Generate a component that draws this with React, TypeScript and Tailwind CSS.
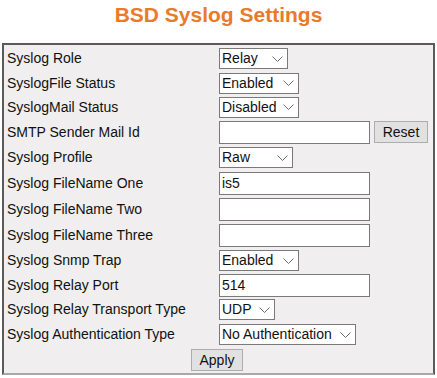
import React from "react";

const font = "font-['Liberation_Sans',Arial,sans-serif]";

function Chevron() {
  return (
    <svg className="pointer-events-none absolute right-[5px] top-1/2 -translate-y-1/2" width="11" height="6" viewBox="0 0 11 6" fill="none">
      <path d="M0.5 0.5 L5.5 5.5 L10.5 0.5" stroke="#6d6d6d" strokeWidth="1" />
    </svg>
  );
}

function Select({ value, options, width }: { value: string; options: string[]; width: string }) {
  return (
    <div className={`relative h-[21px] ${width}`}>
      <select
        defaultValue={value}
        className={`${font} block h-full w-full appearance-none border border-[#7a7a7a] bg-white pl-[2px] text-[14px] leading-[19px] text-[#111] outline-none`}
      >
        {options.map((o) => (
          <option key={o}>{o}</option>
        ))}
      </select>
      <Chevron />
    </div>
  );
}

function TextInput({ value = "" }: { value?: string }) {
  return (
    <input
      defaultValue={value}
      className={`${font} block h-[23px] w-[151px] border border-[#7a7a7a] bg-white px-[2px] text-[14px] text-[#111] outline-none`}
    />
  );
}

function Button({ label, width }: { label: string; width: string }) {
  return (
    <button className={`${font} h-[22px] ${width} border border-[#adadad] bg-[#e1e1e1] text-[14px] text-[#111]`}>{label}</button>
  );
}

function Row({ label, h, children }: { label: string; h: string; children: React.ReactNode }) {
  return (
    <div className={`flex items-center ${h}`}>
      <div className="w-[215px] pl-[3px] text-[14px] text-[#111]">{label}</div>
      <div className="flex items-center gap-[4px]">{children}</div>
    </div>
  );
}

export default function App() {
  return (
    <div className={`${font} h-[378px] w-[437px] bg-white`}>
      <div className="flex h-[43px] justify-center pt-[2px]">
        <h1 className="text-[21px] font-bold leading-[25px] text-[#ea7a2b]">BSD Syslog Settings</h1>
      </div>
      <div className="ml-[2px] w-[433px] border-2 border-b-2 border-[#5a5a5a] border-b-[#a9a9a9] bg-[#f0eeee] pt-[1px]">
        <Row label="Syslog Role" h="h-[25px]">
          <Select value="Relay" options={["Relay", "Local"]} width="w-[69px]" />
        </Row>
        <Row label="SyslogFile Status" h="h-[24px]">
          <Select value="Enabled" options={["Enabled", "Disabled"]} width="w-[80px]" />
        </Row>
        <Row label="SyslogMail Status" h="h-[24px]">
          <Select value="Disabled" options={["Enabled", "Disabled"]} width="w-[80px]" />
        </Row>
        <Row label="SMTP Sender Mail Id" h="h-[26px]">
          <TextInput />
          <Button label="Reset" width="w-[54px]" />
        </Row>
        <Row label="Syslog Profile" h="h-[25px]">
          <Select value="Raw" options={["Raw", "Cooked"]} width="w-[74px]" />
        </Row>
        <Row label="Syslog FileName One" h="h-[26px]">
          <TextInput value="is5" />
        </Row>
        <Row label="Syslog FileName Two" h="h-[26px]">
          <TextInput />
        </Row>
        <Row label="Syslog FileName Three" h="h-[26px]">
          <TextInput />
        </Row>
        <Row label="Syslog Snmp Trap" h="h-[25px]">
          <Select value="Enabled" options={["Enabled", "Disabled"]} width="w-[80px]" />
        </Row>
        <Row label="Syslog Relay Port" h="h-[24px]">
          <TextInput value="514" />
        </Row>
        <Row label="Syslog Relay Transport Type" h="h-[25px]">
          <Select value="UDP" options={["UDP", "TCP"]} width="w-[56px]" />
        </Row>
        <Row label="Syslog Authentication Type" h="h-[25px]">
          <Select value="No Authentication" options={["No Authentication", "Beep"]} width="w-[137px]" />
        </Row>
        <div className="flex h-[26px] items-center justify-center pr-[3px]">
          <Button label="Apply" width="w-[52px]" />
        </div>
      </div>
    </div>
  );
}
